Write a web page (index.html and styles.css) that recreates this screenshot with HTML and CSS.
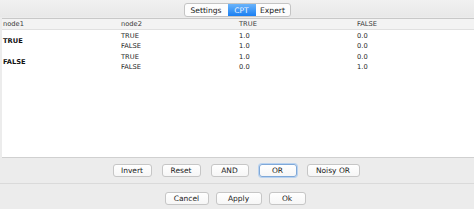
FILE: index.html
```html
<!DOCTYPE html>
<html>
<head>
<meta charset="utf-8">
<link rel="stylesheet" href="styles.css">
</head>
<body>
<div class="window">
  <div class="tabbar">
    <div class="tabs">
      <div class="tab">Settings</div>
      <div class="tab active">CPT</div>
      <div class="tab">Expert</div>
    </div>
  </div>
  <div class="panel">
    <div class="table">
      <div class="thead">
        <div class="cell">node1</div>
        <div class="cell">node2</div>
        <div class="cell">TRUE</div>
        <div class="cell">FALSE</div>
      </div>
      <div class="group">
        <div class="cell parent">TRUE</div>
        <div class="rows">
          <div class="row"><div class="cell">TRUE</div><div class="cell">1.0</div><div class="cell">0.0</div></div>
          <div class="row"><div class="cell">FALSE</div><div class="cell">1.0</div><div class="cell">0.0</div></div>
        </div>
      </div>
      <div class="group">
        <div class="cell parent">FALSE</div>
        <div class="rows">
          <div class="row"><div class="cell">TRUE</div><div class="cell">1.0</div><div class="cell">0.0</div></div>
          <div class="row"><div class="cell">FALSE</div><div class="cell">0.0</div><div class="cell">1.0</div></div>
        </div>
      </div>
    </div>
    <div class="scrollbar"></div>
  </div>
  <div class="actions">
    <button class="btn w39">Invert</button>
    <button class="btn w39">Reset</button>
    <button class="btn w38">AND</button>
    <button class="btn w38 focus">OR</button>
    <button class="btn w53">Noisy OR</button>
  </div>
  <div class="footer">
    <button class="btn w44">Cancel</button>
    <button class="btn w46">Apply</button>
    <button class="btn w37">Ok</button>
  </div>
</div>
</body>
</html>
```
FILE: styles.css
```css
* { box-sizing: border-box; }
html, body { margin: 0; padding: 0; }
body {
  width: 474px;
  height: 209px;
  background: #ececec;
  font-family: "DejaVu Sans", "Liberation Sans", sans-serif;
  overflow: hidden;
}
.window {
  display: flex;
  flex-direction: column;
  width: 474px;
  height: 209px;
}
.tabbar {
  height: 17px;
  display: flex;
  justify-content: center;
  align-items: flex-end;
  background: linear-gradient(#f1f1f1, #e8e8e8);
}
.tabs {
  display: flex;
  height: 14px;
  border: 1px solid #c4c4c4;
  border-radius: 3px;
  background: #fdfdfd;
  overflow: hidden;
}
.tab {
  font-size: 7.6px;
  color: #1a1a1a;
  display: flex;
  align-items: center;
  justify-content: center;
}
.tab:first-child { width: 43px; }
.tab.active {
  background: linear-gradient(#6ab4fb, #1a7ff2);
  color: #eef5ff;
  width: 28px;
}
.tab:last-child { width: 34px; }
.panel {
  margin: 1px 0 0 2px;
  height: 140px;
  display: flex;
  background: #fff;
  border-top: 1px solid #c8c8c8;
  border-bottom: 1px solid #d0d0d0;
}
.table {
  flex: 1;
  display: flex;
  flex-direction: column;
}
.scrollbar {
  width: 2px;
  background: #bdbdbd;
}
.thead {
  display: flex;
  height: 11px;
  background: #f3f3f3;
  border-bottom: 1px solid #e0e0e0;
  align-items: center;
}
.cell {
  width: 118px;
  font-size: 6.7px;
  color: #2a2a2a;
  padding-left: 1px;
  line-height: 10px;
}
.thead .cell { color: #3a3a3a; }
.group {
  display: flex;
  align-items: center;
}
.thead + .group { margin-top: 1px; }
.parent {
  font-weight: bold;
  color: #111;
}
.rows { display: flex; flex-direction: column; }
.row { display: flex; height: 10.3px; align-items: center; }
.row .cell { color: #1e1e1e; }
.actions {
  height: 26px;
  display: flex;
  justify-content: center;
  align-items: center;
  gap: 10px;
  padding-right: 2px;
  border-bottom: 1px solid #dadada;
}
.footer {
  flex: 1;
  display: flex;
  justify-content: center;
  align-items: center;
  gap: 7px;
  padding-top: 3px;
  padding-right: 4px;
}
.btn {
  font-family: "DejaVu Sans", "Liberation Sans", sans-serif;
  font-size: 7.5px;
  color: #222;
  height: 13px;
  padding: 0;
  background: linear-gradient(#ffffff, #f6f6f6);
  border: 1px solid #c6c6c6;
  border-radius: 3px;
  display: flex;
  align-items: center;
  justify-content: center;
}
.btn.focus {
  border: 1px solid #7fa8d8;
  box-shadow: 0 0 0 1px #b8d2f0;
}
.w39 { width: 39px; }
.w38 { width: 38px; }
.w53 { width: 53px; }
.w44 { width: 44px; }
.w46 { width: 46px; }
.w37 { width: 37px; }
```
